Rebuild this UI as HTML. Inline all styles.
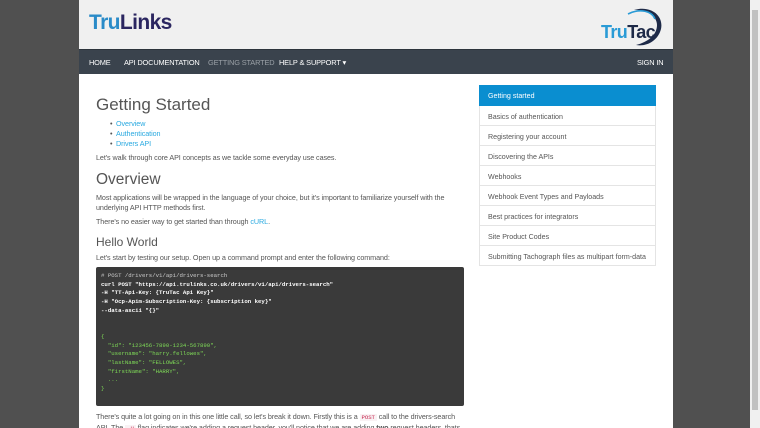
<!DOCTYPE html>
<html><head><meta charset="utf-8"><style>
*{margin:0;padding:0;box-sizing:border-box}
body{width:760px;height:428px;overflow:hidden;background:#505050;font-family:"Liberation Sans",sans-serif;position:relative}
#page{position:absolute;left:79px;top:0;width:594px;height:428px;background:#fff;overflow:hidden}
#hdr{position:absolute;left:0;top:0;width:594px;height:49px;background:#f0f0f0}
#nav{position:absolute;left:0;top:49px;width:594px;height:25px;background:#3a434d;border-top:1px solid #2d343c}
.ni{position:absolute;top:8px;font-size:7.4px;color:#fff;letter-spacing:-0.15px}
.a{position:absolute;white-space:nowrap}
p,.t{font-size:7.2px;color:#555;letter-spacing:-0.08px}
a{color:#29a9e0;text-decoration:none}
h1{font-weight:normal;color:#555;font-size:17px}
#code{position:absolute;left:17px;top:267px;width:368px;height:139px;background:#3a3a3a;border-radius:2px;font-family:"Liberation Mono",monospace;font-size:5.7px;color:#fff;padding:5px 5px;line-height:8.7px;white-space:pre}
#side{position:absolute;left:400px;top:85px;width:177px}
.si{height:20px;border:1px solid #e4e4e4;border-top:none;font-size:7.1px;color:#555;padding:7px 8px 0;white-space:nowrap}
.si.act{background:#0a8ed0;color:#fff;border-color:#0a8ed0;height:21px}
code.k{font-family:"Liberation Mono",monospace;font-size:5.7px;color:#c7254e;background:#f9f2f4;padding:0 2px}
</style></head><body>
<div id="page">
<div id="hdr">
<div class="a" style="left:10px;top:11px;font-size:21px;font-weight:bold;letter-spacing:-0.6px"><span style="color:#2a8bc8">Tru</span><span style="color:#2b2660">Links</span></div>
<svg class="a" style="left:521px;top:5px" width="66" height="42" viewBox="0 0 66 42">
<path d="M34 5 C50 0 64 10 61 24 C58 36 46 42 36 40 C48 37 57 30 57 20 C57 11 47 5 34 5Z" fill="#1e2a48"/>
<path d="M28 9 C40 3 52 6 55 14" stroke="#2a9bd6" stroke-width="1.6" fill="none"/>
<text x="1" y="33" font-family="Liberation Sans,sans-serif" font-weight="bold" font-size="18" letter-spacing="-0.6"><tspan fill="#2a9bd6">Tru</tspan><tspan fill="#1e2a48">Tac</tspan></text>
</svg>
</div>
<div id="nav">
<span class="ni" style="left:10px">HOME</span>
<span class="ni" style="left:45px">API DOCUMENTATION</span>
<span class="ni" style="left:129px;color:#9aa0a6">GETTING STARTED</span>
<span class="ni" style="left:200px">HELP &amp; SUPPORT ▾</span>
<span class="ni" style="left:558px">SIGN IN</span>
</div>
<h1 class="a" style="left:17px;top:95px">Getting Started</h1>
<div class="a t" style="left:37px;top:119px;line-height:9.8px">
<div><span style="position:absolute;left:-6px">•</span><a>Overview</a></div>
<div><span style="position:absolute;left:-6px">•</span><a>Authentication</a></div>
<div><span style="position:absolute;left:-6px">•</span><a>Drivers API</a></div>
</div>
<p class="a" style="left:17px;top:153px">Let's walk through core API concepts as we tackle some everyday use cases.</p>
<h1 class="a" style="left:17px;top:171px;font-size:15.5px">Overview</h1>
<p class="a" style="left:17px;top:193px;line-height:10px">Most applications will be wrapped in the language of your choice, but it's important to familiarize yourself with the<br>underlying API HTTP methods first.</p>
<p class="a" style="left:17px;top:217px">There's no easier way to get started than through <a>cURL</a>.</p>
<h1 class="a" style="left:17px;top:235px;font-size:12px">Hello World</h1>
<p class="a" style="left:17px;top:253px">Let's start by testing our setup. Open up a command prompt and enter the following command:</p>
<div id="code"><span style="color:#ccc"># POST /drivers/v1/api/drivers-search</span>
<b>curl POST "https://api.trulinks.co.uk/drivers/v1/api/drivers-search"
-H "TT-Api-Key: {TruTac Api Key}"
-H "Ocp-Apim-Subscription-Key: {subscription key}"
--data-ascii "{}"</b>


<span style="color:#7ed957">{
  "id": "123456-7890-1234-567890",
  "username": "harry.fellowes",
  "lastName": "FELLOWES",
  "firstName": "HARRY",
  ...
}</span></div>
<p class="a" style="left:17px;top:412px;line-height:10px">There's quite a lot going on in this one little call, so let's break it down. Firstly this is a <code class="k">POST</code> call to the drivers-search<br>API. The <code class="k">-H</code> flag indicates we're adding a request header, you'll notice that we are adding <b>two</b> request headers, thats</p>
<div id="side">
<div class="si act">Getting started</div>
<div class="si">Basics of authentication</div>
<div class="si">Registering your account</div>
<div class="si">Discovering the APIs</div>
<div class="si">Webhooks</div>
<div class="si">Webhook Event Types and Payloads</div>
<div class="si">Best practices for integrators</div>
<div class="si">Site Product Codes</div>
<div class="si">Submitting Tachograph files as multipart form-data</div>
</div>
</div>
<div class="a" style="left:750px;top:0;width:10px;height:428px;background:#f0f0f0"><div style="margin:10px 2px;width:6px;height:400px;background:#c1c1c1"></div></div>
</body></html>
